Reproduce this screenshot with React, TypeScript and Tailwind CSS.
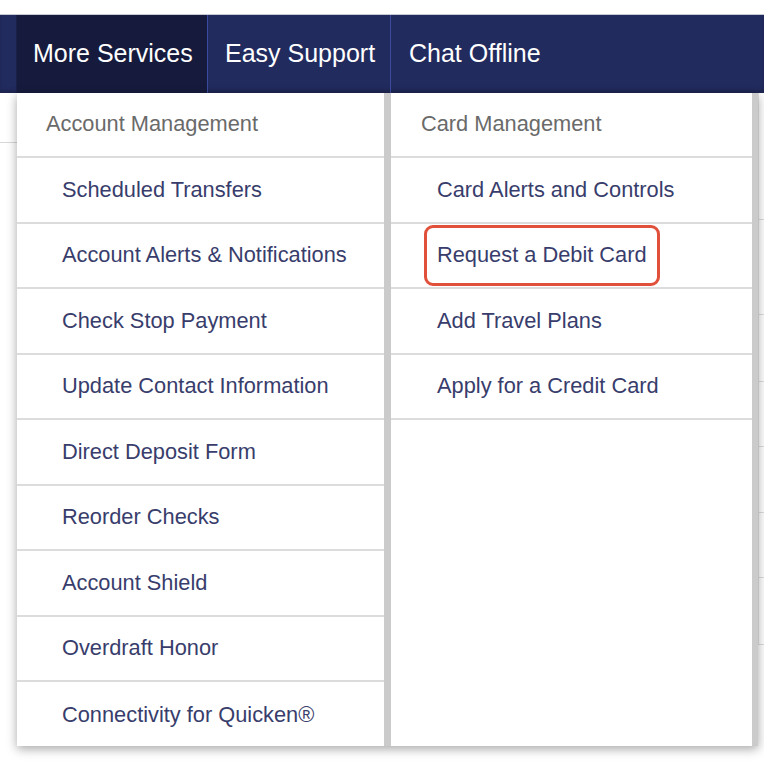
export default function App() {
  const accountItems = [
    "Scheduled Transfers",
    "Account Alerts & Notifications",
    "Check Stop Payment",
    "Update Contact Information",
    "Direct Deposit Form",
    "Reorder Checks",
    "Account Shield",
    "Overdraft Honor",
    "Connectivity for Quicken®",
  ]
  const cardItems = ["Card Alerts and Controls", "Request a Debit Card", "Add Travel Plans", "Apply for a Credit Card"]
  // rows of the page that peeks out at the right edge
  const backRows = [127, 95, 67, 65, 66, 65, 67]

  return (
    <div className="relative w-[764px] h-[768px] overflow-hidden bg-white font-['Liberation_Sans',Arial,sans-serif]">
      <div className="h-[15px] border-b border-[#c9c9d4]" />
      <nav className="flex h-[78px] bg-[#222b5e] text-white text-[25px] shadow-[inset_0_-3px_3px_rgba(0,0,0,0.15)]">
        <div className="w-[17px] border-r border-[#1a2048]" />
        <div className="flex w-[191px] items-center bg-[#161b3d] pl-[16px] border-r border-[#3a4a9e]">More Services</div>
        <div className="flex w-[183px] items-center pl-[17px] border-r border-[#3a4a9e]">Easy Support</div>
        <div className="flex items-center pl-[18px]">Chat Offline</div>
      </nav>

      <div className="flex">
        <div className="flex-1">
          <div className="mt-[49px] border-t border-[#d8d8d8]" />
        </div>
        <div className="w-[6px] border-l border-[#e4e4e4]">
          {backRows.map((h, i) => (
            <div key={i} style={{ height: h }} className="border-b border-[#dddddd]" />
          ))}
        </div>
      </div>

      <div className="absolute left-[17px] top-[93px] flex h-[653px] w-[741px] bg-white shadow-[0_3px_10px_rgba(0,0,0,0.35)]">
        <div className="w-[367px]">
          <div className="flex h-[65px] items-center border-b-2 border-[#dcdcdc] pl-[29px] text-[21.8px] text-[#6a6a6a]">
            Account Management
          </div>
          {accountItems.map((item) => (
            <div
              key={item}
              className="flex h-[65.5px] items-center border-b-2 border-[#dcdcdc] pl-[45px] pt-[1px] text-[21.8px] text-[#383d6c] last:border-b-0"
            >
              {item}
            </div>
          ))}
        </div>
        <div className="w-[7px] bg-[#cbcbcb]" />
        <div className="w-[361px]">
          <div className="flex h-[65px] items-center border-b-2 border-[#dcdcdc] pl-[30px] text-[21.8px] text-[#6a6a6a]">
            Card Management
          </div>
          {cardItems.map((item) => (
            <div
              key={item}
              className="flex h-[65.5px] items-center border-b-2 border-[#dcdcdc] pl-[46px] pt-[1px] text-[21.8px] text-[#383d6c]"
            >
              {item === "Request a Debit Card" ? (
                <span className="-ml-[13px] rounded-[9px] border-[3px] border-[#e0503a] px-[10px] py-[11px]">{item}</span>
              ) : (
                item
              )}
            </div>
          ))}
        </div>
        <div className="w-[6px] bg-[#cbcbcb]" />
      </div>
    </div>
  )
}
